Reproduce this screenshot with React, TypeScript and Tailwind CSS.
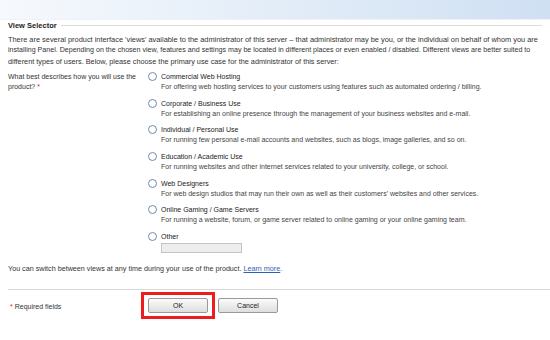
const options = [
  { title: "Commercial Web Hosting", desc: "For offering web hosting services to your customers using features such as automated ordering / billing." },
  { title: "Corporate / Business Use", desc: "For establishing an online presence through the management of your business websites and e-mail." },
  { title: "Individual / Personal Use", desc: "For running few personal e-mail accounts and websites, such as blogs, image galleries, and so on." },
  { title: "Education / Academic Use", desc: "For running websites and other internet services related to your university, college, or school." },
  { title: "Web Designers", desc: "For web design studios that may run their own as well as their customers' websites and other services." },
  { title: "Online Gaming / Game Servers", desc: "For running a website, forum, or game server related to online gaming or your online gaming team." },
]

const Radio = () => (
  <span className="inline-block w-[9px] h-[9px] rounded-full border border-[#6f8bab] bg-white mr-[4px] shrink-0" />
)

const btn =
  "w-[60px] h-[15px] rounded-[2px] border border-[#9a9a9a] bg-linear-to-b from-[#fbfbfb] to-[#dedede] text-[7px] leading-[13px] text-[#222] font-['Liberation_Sans',Arial,sans-serif]"

const App = () => {
  return (
    <div className="w-[550px] h-[340px] bg-white text-[#333] font-['Liberation_Sans',Arial,sans-serif] text-[7px] leading-[11px] overflow-hidden">
      <div className="h-[19px] bg-linear-to-r from-[#f6f9fd] via-[#e3edf8] to-[#cfe0f3]" />
      <div className="h-[1px] bg-[#eef2f6]" />

      <div className="flex items-center px-[8px]">
        <span className="font-bold text-[#222] text-[7.5px]">View Selector</span>
        <div className="flex-1 h-[1px] bg-[#dcdcdc] ml-[4px]" />
      </div>

      <div className="flex flex-col px-[8px] mt-[3px] leading-[11px] whitespace-nowrap">
        <span className="text-[7.4px]">
          There are several product interface 'views' available to the administrator of this server – that administrator may be you, or the individual on behalf of whom you are
        </span>
        <span className="text-[7.1px]">
          installing Panel. Depending on the chosen view, features and settings may be located in different places or even enabled / disabled. Different views are better suited to
        </span>
        <span className="text-[7.3px]">
          different types of users. Below, please choose the primary use case for the administrator of this server:
        </span>
      </div>

      <div className="flex px-[8px] mt-[4px]">
        <div className="w-[140px] shrink-0 leading-[9.5px] pt-[1px]">
          What best describes how you will use the
          <br />
          product? <span className="text-[#e02020]">*</span>
        </div>
        <div className="flex flex-col">
          {options.map((o) => (
            <div key={o.title} className="mb-[5.7px]">
              <div className="flex items-center h-[11px]">
                <Radio />
                <span className="text-[#222]">{o.title}</span>
              </div>
              <div className="pl-[13px] h-[10px] leading-[10px] text-[#444]">{o.desc}</div>
            </div>
          ))}
          <div className="flex items-center h-[11px]">
            <Radio />
            <span className="text-[#222]">Other</span>
          </div>
          <div className="pl-[13px] mt-[1px]">
            <div className="w-[81px] h-[10px] bg-[#ededed] border border-[#c4c4c4]" />
          </div>
        </div>
      </div>

      <p className="px-[8px] mt-[10px] text-[7.2px]">
        You can switch between views at any time during your use of the product.{" "}
        <a className="text-[#2b62b8] underline">Learn more</a>.
      </p>

      <div className="ml-[8px] h-[1px] bg-[#d8d8d8] mt-[15px]" />

      <div className="flex items-center px-[10px] mt-[2px]">
        <div className="w-[131px] shrink-0 pt-[2px]">
          <span className="text-[#e02020]">*</span> Required fields
        </div>
        <div className="flex border-[3px] border-[#ee1c1c] px-[4px] py-[3px]">
          <button className={btn}>OK</button>
        </div>
        <button className={`ml-[3px] ${btn}`}>Cancel</button>
      </div>
    </div>
  )
}

export default App
